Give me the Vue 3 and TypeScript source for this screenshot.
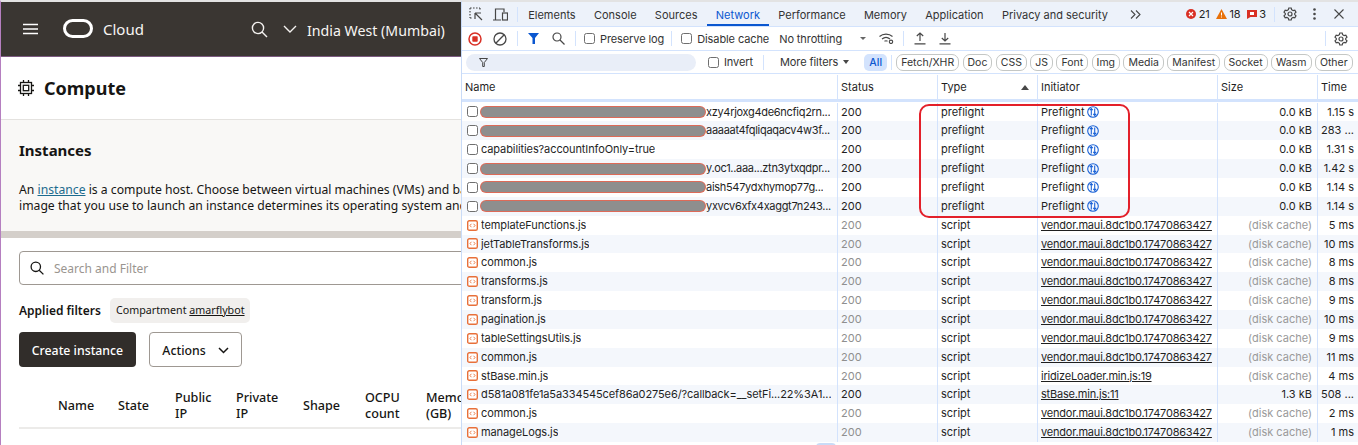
<script setup lang="ts">
interface Row {
  icon: 'doc' | 'js'
  redact?: boolean
  name: string
  strong?: boolean
  type: string
  init: string
  size: string
  time: string
}
const vendor = 'vendor.maui.8dc1b0.17470863427'
const pre = (name: string, time: string, redact = true): Row => ({ icon: 'doc', redact, name, strong: true, type: 'preflight', init: 'Preflight', size: '0.0 kB', time })
const js = (name: string, time: string, init = vendor, size = '(disk cache)'): Row => ({ icon: 'js', name, type: 'script', init, size, time })
const rows: Row[] = [
  pre('xzy4rjoxg4de6ncfiq2rn...', '1.15 s'),
  pre('aaaaat4fqliqaqacv4w3f...', '283 ...'),
  pre('capabilities?accountInfoOnly=true', '1.31 s', false),
  pre('y.oc1..aaa...ztn3ytxqdpr...', '1.42 s'),
  pre('aish547ydxhymop77g...', '1.14 s'),
  pre('yxvcv6xfx4xaggt7n243...', '1.14 s'),
  js('templateFunctions.js', '5 ms'),
  js('jetTableTransforms.js', '10 ms'),
  js('common.js', '8 ms'),
  js('transforms.js', '8 ms'),
  js('transform.js', '9 ms'),
  js('pagination.js', '10 ms'),
  js('tableSettingsUtils.js', '9 ms'),
  js('common.js', '11 ms'),
  js('stBase.min.js', '4 ms', 'iridizeLoader.min.js:19'),
  { ...js('d581a081fe1a5a334545cef86a0275e6/?callback=__setFi...22%3A1...', '508 ...', 'stBase.min.js:11', '1.3 kB'), strong: true },
  js('common.js', '2 ms'),
  js('manageLogs.js', '1 ms'),
]
const tabs = ['Elements', 'Console', 'Sources', 'Network', 'Performance', 'Memory', 'Application', 'Privacy and security']
const chips = ['Fetch/XHR', 'Doc', 'CSS', 'JS', 'Font', 'Img', 'Media', 'Manifest', 'Socket', 'Wasm', 'Other']
const heads = [
  { label: 'Name', w: 60 },
  { label: 'State', w: 57 },
  { label: 'Public IP', w: 61 },
  { label: 'Private IP', w: 67 },
  { label: 'Shape', w: 62 },
  { label: 'OCPU count', w: 61 },
  { label: 'Memory (GB)', w: 60 },
]
</script>

<template>
  <div class="page">
    <section class="console">
      <header class="nav">
        <svg class="burger" width="16" height="12" viewBox="0 0 16 12"><path d="M0 1.5h15M0 6h15M0 10.5h15" stroke="#fff" stroke-width="1.4" /></svg>
        <span class="logo"></span>
        <span class="cloud">Cloud</span>
        <svg class="nav-search" width="17" height="17" viewBox="0 0 17 17" fill="none" stroke="#f4f2f0" stroke-width="1.4"><circle cx="7" cy="7" r="5.6" /><path d="M11 11l5 5" /></svg>
        <svg class="nav-chev" width="14" height="8" viewBox="0 0 14 8" fill="none" stroke="#f4f2f0" stroke-width="1.4"><path d="M1 1l6 6 6-6" /></svg>
        <span class="region">India West (Mumbai)</span>
      </header>
      <div class="title-bar">
        <svg width="16" height="16" viewBox="0 0 16 16" fill="none" stroke="#161513" stroke-width="1.3"><rect x="2.5" y="2.5" width="11" height="11" /><rect x="5.3" y="5.3" width="5.4" height="5.4" /><path d="M5.5 0v2.5M10.5 0v2.5M5.5 13.5V16M10.5 13.5V16M0 5.5h2.5M0 10.5h2.5M13.5 5.5H16M13.5 10.5H16" /></svg>
        <h1>Compute</h1>
      </div>
      <div class="intro">
        <h2>Instances</h2>
        <p>An <a>instance</a> is a compute host. Choose between virtual machines (VMs) and bare metal instances. The</p>
        <p>image that you use to launch an instance determines its operating system and other software.</p>
      </div>
      <div class="band"></div>
      <div class="work">
        <div class="searchbox">
          <svg width="14" height="14" viewBox="0 0 14 14" fill="none" stroke="#161513" stroke-width="1.3"><circle cx="5.8" cy="5.8" r="4.7" /><path d="M9.2 9.2l4.2 4.2" /></svg>
          <span>Search and Filter</span>
        </div>
        <div class="applied">
          <strong>Applied filters</strong>
          <span class="tag">Compartment <u>amarflybot</u></span>
        </div>
        <div class="actions">
          <button class="primary">Create instance</button>
          <button class="secondary">Actions
            <svg width="11" height="7" viewBox="0 0 11 7" fill="none" stroke="#161513" stroke-width="1.5"><path d="M1 1l4.5 4.5L10 1" /></svg>
          </button>
        </div>
        <div class="thead">
          <span v-for="h in heads" :key="h.label" :style="{ width: h.w + 'px' }">{{ h.label }}</span>
        </div>
      </div>
    </section>

    <section class="devtools">
      <div class="tabbar">
        <svg class="ic first" width="14" height="14" viewBox="0 0 14 14" fill="none" stroke="#474747" stroke-width="1.2"><path d="M1 1h10M1 1v10M1 11h3M11 1v3" stroke-dasharray="1.6 1.4" /><path d="M6 6h6M6 6v6M6 6l7 7" /></svg>
        <svg class="ic" width="15" height="13" viewBox="0 0 15 13" fill="none" stroke="#474747" stroke-width="1.2"><path d="M0 12h8M2.500 12V1H11v3" /><rect x="9.500" y="5" width="5" height="7" /></svg>
        <i class="vsep tabsep"></i>
        <span v-for="t in tabs" :key="t" class="tab" :class="{ on: t === 'Network' }">{{ t }}</span>
        <svg class="more" width="11" height="9" viewBox="0 0 11 9" fill="none" stroke="#474747" stroke-width="1.1"><path d="M1 .5l4 4-4 4M6 .5l4 4-4 4" /></svg>
        <span class="counts">
          <svg width="10" height="10" viewBox="0 0 10 10"><circle cx="5" cy="5" r="5" fill="#d93025" /><path d="M3 3l4 4M7 3l-4 4" stroke="#fff" stroke-width="1.2" /></svg>
          <b>21</b>
          <svg class="gap" width="11" height="10" viewBox="0 0 11 10"><path d="M5.500 0L11 10H0z" fill="#e8710a" /><path d="M5.500 3.500v3M5.500 7.500v1" stroke="#fff" /></svg>
          <b>18</b>
          <svg class="gap" width="10" height="10" viewBox="0 0 10 10"><path d="M0 1h10v7H3.500L0 10z" fill="#d93025" /><rect x="3" y="3" width="4" height="3" fill="#fff" /></svg>
          <b>3</b>
        </span>
        <i class="vsep countsep"></i>
        <svg class="gear tabgear" width="14" height="14" viewBox="0 0 14 14" fill="none" stroke="#474747" stroke-width="1.2"><circle cx="7" cy="7" r="2" /><path d="M5.800 1h2.400l.4 1.700 1.500.9 1.700-.5 1.200 2.100-1.300 1.200v1.200l1.300 1.200-1.200 2.100-1.700-.5-1.500.9L8.200 13H5.800l-.4-1.700-1.500-.9-1.700.5L1 8.800l1.300-1.200V6.400L1 5.200l1.200-2.100 1.700.5 1.500-.9z" /></svg>
        <svg class="dots" width="3" height="12" viewBox="0 0 3 12" fill="#474747"><circle cx="1.500" cy="1.500" r="1.300" /><circle cx="1.500" cy="6" r="1.300" /><circle cx="1.500" cy="10.500" r="1.300" /></svg>
        <svg class="close" width="10" height="10" viewBox="0 0 10 10" stroke="#474747" stroke-width="1.1"><path d="M.5.5l9 9M9.500.5l-9 9" /></svg>
      </div>

      <div class="toolbar">
        <svg class="t-rec" width="14" height="14" viewBox="0 0 14 14"><circle cx="7" cy="7" r="6" fill="none" stroke="#d93025" stroke-width="1.500" /><rect x="4.300" y="4.300" width="5.400" height="5.400" rx=".8" fill="#d93025" /></svg>
        <svg class="t-clear" width="14" height="14" viewBox="0 0 14 14" fill="none" stroke="#474747" stroke-width="1.300"><circle cx="7" cy="7" r="6" /><path d="M11.200 2.800l-8.400 8.400" /></svg>
        <i class="vsep s1"></i>
        <svg class="t-fun" width="12" height="11" viewBox="0 0 12 11"><path d="M0 0h11L7 5v6H4.500V5z" fill="#0b57d0" /></svg>
        <svg class="t-find" width="13" height="13" viewBox="0 0 13 13" fill="none" stroke="#474747" stroke-width="1.200"><circle cx="5" cy="5" r="4" /><path d="M8 8l4.500 4.500" /></svg>
        <i class="vsep s2"></i>
        <span class="box b1"></span><span class="lbl">Preserve log</span>
        <i class="vsep s3"></i>
        <span class="box b2"></span><span class="lbl">Disable cache</span>
        <span class="lbl throttle">No throttling</span>
        <i class="tri small"></i>
        <svg class="t-wifi" width="15" height="11" viewBox="0 0 15 11" fill="none" stroke="#474747" stroke-width="1.100"><path d="M.5 3.500C4 .3 10 .3 13.500 3.500M3 6c2.400-2 5.600-2 8 0M5.500 8.300c1-.8 2-.8 3 0" /><circle cx="12" cy="8.800" r="1.700" /></svg>
        <i class="vsep s4"></i>
        <svg class="t-up" width="12" height="13" viewBox="0 0 12 13" fill="none" stroke="#474747" stroke-width="1.200"><path d="M6 9V1M2.800 4L6 1l3.200 3M.5 11.900h11" /></svg>
        <svg class="t-down" width="12" height="13" viewBox="0 0 12 13" fill="none" stroke="#474747" stroke-width="1.200"><path d="M6 1v8M2.800 6L6 9l3.200-3M.5 11.900h11" /></svg>
        <i class="grow"></i>
        <i class="vsep s5"></i>
        <svg class="gear t-gear" width="14" height="14" viewBox="0 0 14 14" fill="none" stroke="#474747" stroke-width="1.200"><circle cx="7" cy="7" r="2" /><path d="M5.800 1h2.400l.4 1.700 1.500.9 1.700-.5 1.200 2.100-1.300 1.200v1.200l1.300 1.200-1.200 2.100-1.700-.5-1.500.9L8.200 13H5.800l-.4-1.700-1.500-.9-1.700.5L1 8.800l1.300-1.200V6.400L1 5.200l1.200-2.100 1.700.5 1.500-.9z" /></svg>
      </div>

      <div class="filters">
        <div class="fpill">
          <svg width="9" height="9" viewBox="0 0 9 9" fill="none" stroke="#474747" stroke-width="1"><path d="M.5.5h8L5.300 4.500v4H3.700v-4z" /></svg>
        </div>
        <span class="box b3"></span><span class="lbl inv">Invert</span>
        <i class="vsep s6"></i>
        <span class="lbl mf">More filters</span>
        <i class="tri dark"></i>
        <span class="all">All</span>
        <i class="vsep s7"></i>
        <div class="chips">
          <span v-for="c in chips" :key="c" class="chip">{{ c }}</span>
        </div>
      </div>

      <div class="grid ghead">
        <span class="c-name">Name</span>
        <span class="c-status">Status</span>
        <span class="c-type">Type<i class="tri up"></i></span>
        <span class="c-init">Initiator</span>
        <span class="c-size">Size</span>
        <span class="c-time">Time</span>
      </div>

      <div class="body">
        <div v-for="(r, i) in rows" :key="i" class="grid row" :class="{ alt: i % 2 === 1 }">
          <span class="c-name">
            <span v-if="r.icon === 'doc'" class="box rowbox"></span>
            <svg v-else class="jsicon" width="11" height="11" viewBox="0 0 11 11"><rect x=".7" y=".7" width="9.600" height="9.600" rx="1.600" fill="#fff" stroke="#e8703a" stroke-width="1.400" /><path d="M4.400 3.800L3 5.500l1.400 1.700M6.600 3.800L8 5.500 6.600 7.200" fill="none" stroke="#e8703a" stroke-width=".9" /></svg>
            <i v-if="r.redact" class="redact"></i>
            <span class="ell">{{ r.name }}</span>
          </span>
          <span class="c-status" :class="{ dim: !r.strong }">200</span>
          <span class="c-type">{{ r.type }}</span>
          <span class="c-init">
            <template v-if="r.type === 'preflight'">{{ r.init }}<svg class="pf" width="12" height="12" viewBox="0 0 12 12" fill="none" stroke="#1a62d6"><circle cx="6" cy="6" r="5.300" stroke-width="1.100" /><path d="M4.300 9.500V2.600M2.800 4.100l1.500-1.500 1.500 1.500M7.700 2.500v6.900M6.200 7.900l1.500 1.500 1.500-1.500" stroke-width="1.100" /></svg></template>
            <u v-else class="ell">{{ r.init }}</u>
          </span>
          <span class="c-size" :class="{ dimmer: r.size.startsWith('(') }">{{ r.size }}</span>
          <span class="c-time">{{ r.time }}</span>
        </div>
      </div>
      <div class="highlight"></div>
      <div class="scrollnub"></div>
    </section>
  </div>
</template>

<style>
html, body { margin: 0; background: #fff; }
</style>

<style scoped>
.page { width: 1358px; height: 445px; display: flex; overflow: hidden; position: relative; background: #fff; }
svg { display: block; flex: none; }
i { display: block; font-style: normal; flex: none; }

/* console */
.console { width: 461px; flex: none; overflow: hidden; font-family: "Noto Sans", sans-serif; color: #161513; border-left: 1px solid #b57fc0; box-sizing: border-box; border-top: 2px solid #e3e3e3; }
.nav { height: 54px; margin-left: -1px; background: #3a3632; border-bottom: 1px solid #7b5a80; display: flex; align-items: center; box-sizing: content-box; color: #f7f5f3; white-space: nowrap; }
.burger { margin: 0 0 0 23px; }
.logo { width: 30px; height: 19px; border: 3.500px solid #fff; box-sizing: border-box; border-radius: 10px; margin-left: 24px; margin-top: -1px; }
.cloud { font-size: 15px; margin-left: 10px; }
.nav-search { margin-left: 107px; }
.nav-chev { margin-left: 15px; }
.region { font-size: 14.200px; margin-left: 10px; margin-top: 2px; }
.title-bar { height: 62px; display: flex; align-items: center; gap: 10px; padding-left: 17px; border-bottom: 1px solid #e4e2df; box-sizing: content-box; }
h1 { font-size: 18px; font-weight: 700; margin: 0; line-height: 1; }
.intro { height: 111px; background: #f9f8f6; padding: 20px 0 0 18px; box-sizing: border-box; white-space: nowrap; }
h2 { font-size: 15px; font-weight: 700; margin: 0 0 21px; line-height: 21px; }
p { margin: 0; font-size: 12.200px; line-height: 16px; }
a { color: #1c6b8e; text-decoration: underline; }
.band { height: 7px; background: #d4cfca; }
.work { padding: 13px 0 0 18px; white-space: nowrap; }
.searchbox { width: 520px; height: 34px; border: 1px solid #9e9892; border-radius: 4px; box-sizing: border-box; display: flex; align-items: center; padding-left: 10px; gap: 10px; font-size: 12px; color: #9a9590; }
.applied { display: flex; align-items: center; margin-top: 13px; height: 25px; }
.applied strong { font-size: 12px; font-weight: 600; width: 91px; }
.tag { background: #f1efed; border-radius: 5px; font-size: 10.700px; line-height: 25px; height: 25px; padding: 0 6px; width: 140px; box-sizing: border-box; }
.actions { display: flex; gap: 13px; margin-top: 9px; }
button { font: inherit; height: 35px; border-radius: 4px; box-sizing: border-box; font-size: 12.300px; font-weight: 500; padding: 1px 0 0; }
.primary { width: 117px; background: #312d2a; color: #fff; border: none; }
.secondary { width: 93px; background: #fff; color: #161513; border: 1px solid #9e9892; display: flex; align-items: center; justify-content: center; gap: 12px; }
.thead { display: flex; align-items: center; width: 520px; height: 47px; margin-top: 15px; padding: 2px 0 0 39px; box-sizing: border-box; border-bottom: 2px solid #ecebe9; font-size: 12.600px; font-weight: 500; line-height: 16px; white-space: normal; }
.thead span { flex: none; padding-right: 12px; box-sizing: border-box; }

/* devtools */
.devtools { position: relative; flex: 1; min-width: 0; border-left: 1px solid #c9dbf7; box-sizing: border-box; font-family: Inter, "Liberation Sans", sans-serif; font-size: 11px; color: #1f1f1f; border-top: 2px solid #e3e3e3; white-space: nowrap; }
.tabbar { height: 24px; background: #edf2fa; border-bottom: 1px solid #d3e3fd; display: flex; align-items: center; }
.ic.first { margin-left: 7px; }
.ic { margin-left: 10px; flex: none; }
.vsep { width: 1px; height: 15px; background: #d3e3fd; }
.tabsep { margin: 0 0 0 9px; }
.tabsep + .tab { margin-left: 1px; }
.tab { height: 24px; line-height: 26px; padding: 0 9.150px; box-sizing: border-box; color: #333; }
.tab.on { color: #0b57d0; border-bottom: 2px solid #0b57d0; }
.more { margin-left: 13px; }
.counts { display: flex; align-items: center; margin-left: 45px; gap: 2.500px; }
.counts b { font-weight: 400; letter-spacing: -0.2px; }
.counts .gap { margin-left: 4px; }
.countsep { margin-left: 8px; }
.tabgear { margin-left: 8px; }
.dots { margin-left: 16px; }
.close { margin-left: 18px; }
.toolbar { height: 23px; border-bottom: 1px solid #d3e3fd; display: flex; align-items: center; background: #fff; }
.t-rec { margin-left: 6px; }
.t-clear { margin-left: 11px; }
.s1 { margin-left: 10px; }
.t-fun { margin-left: 10px; }
.t-find { margin-left: 12px; }
.s2 { margin-left: 10px; }
.box { width: 11px; height: 11px; border: 1px solid #6f6f6f; border-radius: 2.500px; box-sizing: border-box; background: #fff; flex: none; display: block; }
.b1 { margin-left: 8px; }
.lbl { margin-left: 5px; color: #333; letter-spacing: -0.1px; }
.s3 { margin-left: 7px; }
.b2 { margin-left: 9px; }
.throttle { margin-left: 10px; }
.tri { width: 0; height: 0; border-left: 4px solid transparent; border-right: 4px solid transparent; border-top: 5px solid #474747; }
.tri.small { margin-left: 18px; border-left-width: 3.500px; border-right-width: 3.500px; border-top-width: 3px; border-top-color: #666; }
.t-wifi { margin-left: 13px; }
.s4 { margin-left: 9px; }
.t-up { margin-left: 10px; }
.t-down { margin-left: 13px; }
.grow { flex: 1; }
.t-gear { margin-left: 8px; margin-right: 10px; }
.filters { height: 22px; border-bottom: 1px solid #d3e3fd; display: flex; align-items: center; background: #fff; }
.fpill { width: 230px; height: 17px; border-radius: 9px; background: #e9eef8; margin-left: 4px; display: flex; align-items: center; padding-left: 13px; box-sizing: border-box; flex: none; }
.b3 { margin-left: 12px; }
.s6 { margin-left: 10px; }
.mf { margin-left: 16px; }
.tri.dark { margin-left: 5px; border-left-width: 3.500px; border-right-width: 3.500px; border-top-width: 4px; }
.all { margin-left: 15px; width: 23px; height: 17px; line-height: 17px; border-radius: 5px; background: #d3e3fd; color: #0b57d0; text-align: center; box-sizing: border-box; font-size: 10.500px; font-weight: 500; flex: none; }
.s7 { margin-left: 4px; margin-right: 4px; }
.chips { flex: 1; min-width: 0; display: flex; gap: 3.400px; margin-right: 4px; }
.chip { flex: 0 0 auto; height: 17px; line-height: 15px; padding: 0 4px; border: 1px solid #c4c7c5; border-radius: 7px; box-sizing: border-box; font-size: 10.500px; color: #333; text-align: center; }
.grid { display: grid; grid-template-columns: 375px 100px 100px 180px 100px 1fr; }
.grid > span { box-sizing: border-box; min-width: 0; overflow: hidden; display: flex; align-items: center; border-left: 1px solid #d3e3fd; padding-left: 3px; padding-right: 4px; }
.grid > .c-name { border-left: none; }
.ghead { height: 27px; border-bottom: 3px solid #d3e3fd; box-sizing: border-box; margin-top: 1px; background: #fff; }
.ghead .c-type { justify-content: space-between; padding-right: 8px; }
.tri.up { border-top: none; border-bottom: 5px solid #474747; }
.body { padding-top: .5px; }
.row { height: 18.860px; line-height: 18.860px; background: #fff; }
.row.alt { background: #f4f7fc; }
.row .c-name { padding-left: 5px; padding-right: 2px; gap: 3px; letter-spacing: -0.1px; }
.rowbox { width: 11px; height: 11px; }
.redact { width: 224px; height: 10px; border-radius: 5px; background: #8e8e8e; box-shadow: 0 0 0 1px #dd6a58; margin-right: -2px; }
.redact + .ell { letter-spacing: -0.3px; }
.ell { overflow: hidden; text-overflow: ellipsis; white-space: nowrap; min-width: 0; display: block; }
.row .c-init { padding-right: 0; }
.c-init u { letter-spacing: -0.2px; }
.dim { color: #8f8f8f; }
.dimmer { color: #9a9a9a; }
.row .c-size, .row .c-time { justify-content: flex-end; }
.row .c-size { padding-right: 5px; }
.pf { margin-left: 2px; }
.highlight { position: absolute; left: 457px; top: 102px; width: 211px; height: 114px; border: 2px solid #e3202a; border-radius: 10px; box-sizing: border-box; pointer-events: none; }
.scrollnub { position: absolute; left: 354px; top: 441px; width: 20px; height: 4px; border-radius: 4px 4px 0 0; background: #c9dbf7; }
</style>
